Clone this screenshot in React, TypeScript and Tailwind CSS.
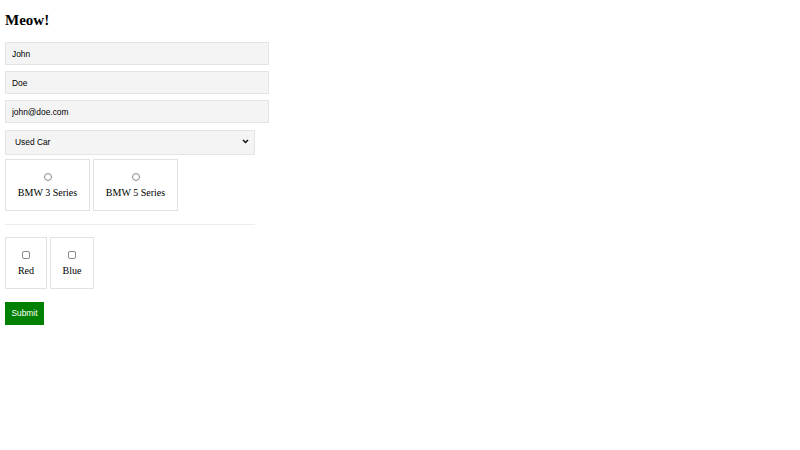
export default function App() {
  const cars = ["BMW 3 Series", "BMW 5 Series"];
  const colors = [
    { name: "Red", w: "w-[42px]" },
    { name: "Blue", w: "w-[44px]" },
  ];

  return (
    <div className="bg-white min-h-[450px] px-[5px] pt-[12px] font-['Liberation_Serif',serif] text-black">
      <h1 className="mb-[13px] text-[15px] font-bold leading-[17px]">Meow!</h1>

      <form className="flex flex-col items-start font-['Liberation_Sans',Arial,sans-serif]">
        <input
          defaultValue="John"
          className="mb-[6px] h-[23px] w-[264px] border border-[#e4e4e4] bg-[#f4f4f4] px-[6px] text-[8.4px] text-black outline-none"
        />
        <input
          defaultValue="Doe"
          className="mb-[6px] h-[23px] w-[264px] border border-[#e4e4e4] bg-[#f4f4f4] px-[6px] text-[8.4px] text-black outline-none"
        />
        <input
          defaultValue="john@doe.com"
          className="mb-[5px] h-[23px] w-[264px] border border-[#e4e4e4] bg-[#f4f4f4] px-[6px] text-[8.4px] text-black outline-none"
        />

        {/* select, drawn with a custom chevron */}
        <div className="relative mb-[6px] h-[25px] w-[250px]">
          <select className="h-full w-full appearance-none border border-[#e4e4e4] bg-[#f4f4f4] pl-[9px] text-[8.4px] text-black outline-none">
            <option>Used Car</option>
            <option>New Car</option>
          </select>
          <svg
            className="pointer-events-none absolute right-[6px] top-[11px]"
            width="7"
            height="5"
            viewBox="0 0 7 5"
          >
            <path d="M1 1 L3.5 3.5 L6 1" fill="none" stroke="#111" strokeWidth="1.5" />
          </svg>
        </div>

        <div className="flex gap-[3px] font-['Liberation_Serif',serif]">
          {cars.map((car) => (
            <label
              key={car}
              className="flex h-[52px] w-[85px] flex-col items-center justify-center gap-[6px] border border-[#e2e2e2] pt-[1px]"
            >
              <input
                type="radio"
                name="car"
                className="h-[8px] w-[8px] appearance-none rounded-full border border-[#8a8a8a] bg-white"
              />
              <span className="text-[10px] leading-[12px]">{car}</span>
            </label>
          ))}
        </div>

        <hr className="mt-[13px] mb-[12px] w-[250px] border-0 border-t border-[#ececec]" />

        <div className="flex gap-[3px] font-['Liberation_Serif',serif]">
          {colors.map((c) => (
            <label
              key={c.name}
              className={`flex h-[52px] ${c.w} flex-col items-center justify-center gap-[6px] border border-[#e2e2e2] pt-[1px]`}
            >
              <input
                type="checkbox"
                className="h-[8px] w-[8px] appearance-none rounded-[2px] border border-[#8a8a8a] bg-white"
              />
              <span className="text-[10px] leading-[12px]">{c.name}</span>
            </label>
          ))}
        </div>

        <button
          type="button"
          className="mt-[13px] h-[23px] w-[39px] bg-[#008000] text-[8.4px] text-white"
        >
          Submit
        </button>
      </form>
    </div>
  );
}
